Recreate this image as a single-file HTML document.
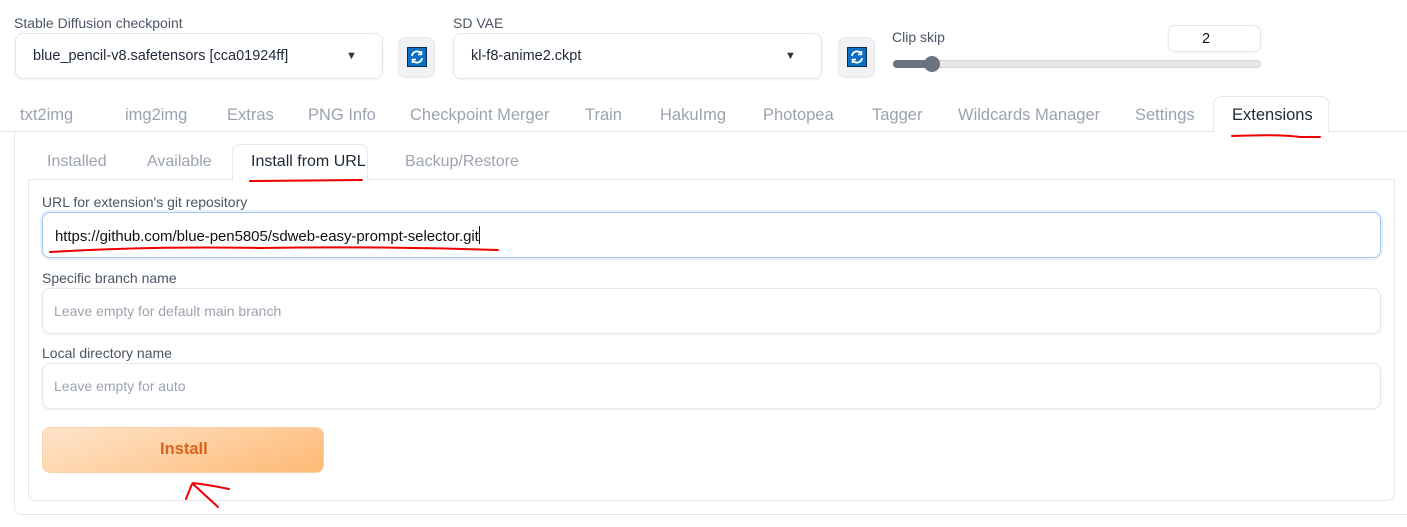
<!DOCTYPE html>
<html><head><meta charset="utf-8"><style>
*{box-sizing:border-box;margin:0;padding:0}
body{width:1407px;height:527px;background:#fff;position:relative;overflow:hidden;font-family:"Liberation Sans",sans-serif;color:#374151}
.a{position:absolute;white-space:nowrap}
.lbl{font-size:14px;color:#4b5563}
.box{position:absolute;border:1px solid #e5e7eb;border-radius:8px;background:#fff;box-shadow:0 1px 2px rgba(0,0,0,.06)}
.tab{position:absolute;top:106px;font-size:16.5px;color:#9ca3af;white-space:nowrap}
.st{position:absolute;top:153px;font-size:16px;color:#9ca3af;white-space:nowrap}
.rb{position:absolute;width:37px;height:41px;border-radius:8px;background:#f1f2f4;border:1px solid #e6e7ea}
.rb svg{position:absolute;left:8px;top:9px}
.ph{font-size:14px;color:#9ca3af}
</style></head><body>
<div class="a lbl" style="left:14px;top:15px">Stable Diffusion checkpoint</div>
<div class="box" style="left:15px;top:33px;width:368px;height:46px"></div>
<div class="a" style="left:33px;top:48px;font-size:14.5px;color:#1f2937">blue_pencil-v8.safetensors [cca01924ff]</div>
<div class="a" style="left:346px;top:50px;font-size:11px;color:#333">▼</div>
<div class="rb" style="left:398px;top:37px"><svg width="20" height="20" viewBox="0 0 20 20"><rect x="0.5" y="0.5" width="19" height="19" fill="#0b6fc4" stroke="#0d2a55"/><path d="M5 9a5 5 0 0 1 9-2.5M15 11a5 5 0 0 1-9 2.5" stroke="#fff" stroke-width="1.8" fill="none"/><path d="M14.5 4v3.5h-3.5M5.5 16v-3.5h3.5" stroke="#fff" stroke-width="1.5" fill="none"/></svg></div>
<div class="a lbl" style="left:453px;top:15px">SD VAE</div>
<div class="box" style="left:453px;top:33px;width:369px;height:46px"></div>
<div class="a" style="left:471px;top:48px;font-size:14.5px;color:#1f2937">kl-f8-anime2.ckpt</div>
<div class="a" style="left:785px;top:50px;font-size:11px;color:#333">▼</div>
<div class="rb" style="left:838px;top:37px"><svg width="20" height="20" viewBox="0 0 20 20"><rect x="0.5" y="0.5" width="19" height="19" fill="#0b6fc4" stroke="#0d2a55"/><path d="M5 9a5 5 0 0 1 9-2.5M15 11a5 5 0 0 1-9 2.5" stroke="#fff" stroke-width="1.8" fill="none"/><path d="M14.5 4v3.5h-3.5M5.5 16v-3.5h3.5" stroke="#fff" stroke-width="1.5" fill="none"/></svg></div>
<div class="a lbl" style="left:892px;top:29px">Clip skip</div>
<div class="box" style="left:1168px;top:25px;width:93px;height:27px;border-radius:7px"></div>
<div class="a" style="left:1202px;top:31px;font-size:14.5px;color:#111">2</div>
<div class="a" style="left:893px;top:60px;width:368px;height:8px;border-radius:4px;background:#e5e7eb;border:1px solid #d1d5db"></div>
<div class="a" style="left:893px;top:60px;width:40px;height:8px;border-radius:4px;background:#6b7280"></div>
<div class="a" style="left:924px;top:56px;width:16px;height:16px;border-radius:50%;background:#6b7280"></div>

<div class="a" style="left:0;top:131px;width:1407px;height:1px;background:#e5e7eb"></div>
<div class="tab" style="left:20px">txt2img</div>
<div class="tab" style="left:125px">img2img</div>
<div class="tab" style="left:227px">Extras</div>
<div class="tab" style="left:308px">PNG Info</div>
<div class="tab" style="left:410px">Checkpoint Merger</div>
<div class="tab" style="left:585px">Train</div>
<div class="tab" style="left:660px">HakuImg</div>
<div class="tab" style="left:763px">Photopea</div>
<div class="tab" style="left:872px">Tagger</div>
<div class="tab" style="left:958px">Wildcards Manager</div>
<div class="tab" style="left:1135px">Settings</div>
<div class="a" style="left:1213px;top:96px;width:116px;height:37px;border:1px solid #e5e7eb;border-bottom:none;border-radius:8px 8px 0 0;background:#fff"></div>
<div class="tab" style="left:1232px;color:#1f2937">Extensions</div>

<div class="a" style="left:14px;top:131px;width:1420px;height:384px;border:1px solid #e5e7eb;border-top:none;border-radius:0 0 8px 8px"></div>
<div class="st" style="left:47px">Installed</div>
<div class="st" style="left:147px">Available</div>
<div class="a" style="left:232px;top:144px;width:136px;height:37px;border:1px solid #e5e7eb;border-bottom:none;border-radius:8px 8px 0 0;background:#fff;z-index:2"></div>
<div class="st" style="left:251px;color:#1f2937;z-index:3">Install from URL</div>
<div class="st" style="left:405px">Backup/Restore</div>
<div class="a" style="left:28px;top:179px;width:1367px;height:322px;border:1px solid #e5e7eb;border-radius:0 0 8px 8px"></div>

<div class="a lbl" style="left:42px;top:194px">URL for extension's git repository</div>
<div class="box" style="left:42px;top:212px;width:1339px;height:46px;border-color:#a5c8ef;box-shadow:0 0 0 2px #e8f1fc"></div>
<div class="a" style="left:55px;top:226px;font-size:15px;color:#111;letter-spacing:-0.05px">https://github.com/blue-pen5805/sdweb-easy-prompt-selector.git<span style="display:inline-block;width:1px;height:18px;background:#111;vertical-align:-3px"></span></div>
<div class="a lbl" style="left:42px;top:270px">Specific branch name</div>
<div class="box" style="left:42px;top:288px;width:1339px;height:46px"></div>
<div class="a ph" style="left:54px;top:303px">Leave empty for default main branch</div>
<div class="a lbl" style="left:42px;top:345px">Local directory name</div>
<div class="box" style="left:42px;top:363px;width:1339px;height:46px"></div>
<div class="a ph" style="left:54px;top:378px">Leave empty for auto</div>

<div class="a" style="left:42px;top:427px;width:282px;height:46px;border-radius:8px;background:linear-gradient(160deg,#ffe5cc,#fdb974);border:1px solid #fcd1a6"></div>
<div class="a" style="left:160px;top:440px;font-size:16.5px;font-weight:bold;color:#d9641b">Install</div>

<svg class="a" style="left:0;top:0;z-index:5" width="1407" height="527">
<g stroke="#e00" stroke-width="2" fill="none" stroke-linecap="round">
<path d="M1232 136 Q1280 134 1300 137 L1320 137"/>
<path d="M250 181 L362 180"/>
<path d="M50 252 Q150 246 260 248 Q380 246 498 250"/>
<path d="M186 499 L192 484 M193 483 Q210 485 229 489 M193 484 L218 507"/>
</g></svg>
</body></html>
